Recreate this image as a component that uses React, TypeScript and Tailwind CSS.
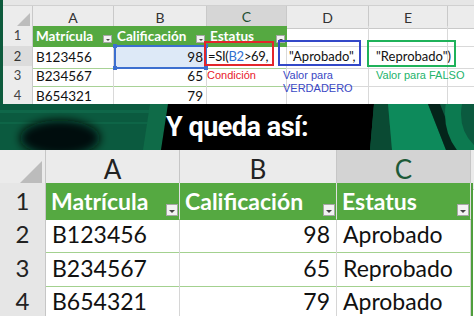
import React from 'react';

// hoja de arriba: columnas y filas
const TOP_GRID = 'grid grid-cols-[30px_81px_93px_80px_82px_79px_29px]';
const BOTTOM_GRID = 'grid grid-cols-[46px_134px_157px_134px_3px]';

function FilterBtn({ big }: { big?: boolean }) {
  return (
    <div
      className={
        big
          ? 'absolute right-[1px] bottom-[3px] w-[12px] h-[12px] bg-[#f2f2f2] border border-[#a6a6a6] flex items-center justify-center'
          : 'absolute right-[1px] bottom-[3px] w-[9px] h-[8px] bg-[#f2f2f2] border border-[#a6a6a6] flex items-center justify-center'
      }
    >
      <div
        className={
          big
            ? 'w-0 h-0 border-l-[3px] border-r-[3px] border-t-[3px] border-l-transparent border-r-transparent border-t-[#444] mt-[2px]'
            : 'w-0 h-0 border-l-[2px] border-r-[2px] border-t-[2px] border-l-transparent border-r-transparent border-t-[#444] mt-[1px]'
        }
      />
    </div>
  );
}

function TopSheet() {
  const num = 'bg-[#ececec] border-r border-b border-[#c9c9c9] flex items-center justify-center text-[13px] text-[#444]';
  const head = 'bg-[#ececec] border-r border-b border-[#c9c9c9] flex items-center justify-center text-[14px] text-[#333]';
  const cell = 'border-r border-b border-[#d9d9d9] flex items-center px-[3px] text-[13.5px] text-[#111] whitespace-nowrap';
  const tcell = 'border-r border-b border-r-[#d9d9d9] border-b-[#a8d296] flex items-center px-[3px] text-[13.5px] text-[#111] whitespace-nowrap';
  const green = 'relative bg-[#55a941] border-r border-b border-[#55a941] flex items-center pl-[3px] text-[13.5px] font-bold text-white whitespace-nowrap';

  return (
    <div className="relative h-[104px] overflow-hidden bg-white border-l-[3px] border-[#0d5a3c]">
      <div className="h-[6px] bg-[#e6e6e6] border-b border-[#d0d0d0]" />
      <div className={`${TOP_GRID} h-[20px]`}>
        <div className="bg-[#ececec] border-r border-b border-[#c9c9c9] flex items-end justify-end pr-[2px] pb-[2px]">
          <div className="w-0 h-0 border-l-[13px] border-b-[13px] border-l-transparent border-b-[#bdbdbd]" />
        </div>
        <div className={head}>A</div>
        <div className={head}>B</div>
        <div className="bg-[#d6d6d6] border-r border-b-2 border-r-[#c9c9c9] border-b-[#217346] flex items-center justify-center text-[14px] text-[#1e4f33]">C</div>
        <div className={head}>D</div>
        <div className={head}>E</div>
        <div className={head}></div>
      </div>
      <div className={`${TOP_GRID} h-[20px]`}>
        <div className={num}>1</div>
        <div className={green}>Matrícula<FilterBtn /></div>
        <div className={green}>Calificación<FilterBtn /></div>
        <div className={green}>Estatus<FilterBtn /></div>
        <div className={cell}></div>
        <div className={cell}></div>
        <div className={cell}></div>
      </div>
      <div className={`${TOP_GRID} h-[20px]`}>
        <div className="bg-[#dcdcdc] border-r border-b border-[#c9c9c9] flex items-center justify-center text-[13px] text-[#333]">2</div>
        <div className={tcell}>B123456</div>
        <div className="relative bg-[#dde9f7] border-2 border-[#3c6fcf] -mt-[1px] flex items-center justify-end px-[2px] text-[13.5px] text-[#111]">
          98
          <div className="absolute -left-[3px] -top-[3px] w-[4px] h-[4px] bg-[#3c6fcf]" />
          <div className="absolute -right-[3px] -top-[3px] w-[4px] h-[4px] bg-[#3c6fcf]" />
          <div className="absolute -left-[3px] -bottom-[3px] w-[4px] h-[4px] bg-[#3c6fcf]" />
          <div className="absolute -right-[3px] -bottom-[3px] w-[4px] h-[4px] bg-[#3c6fcf]" />
        </div>
        <div className="border-r border-b border-r-[#d9d9d9] border-b-[#a8d296] flex items-center pl-[1px] text-[13px] tracking-[-0.3px] text-[#111] whitespace-nowrap">
          =SI(<span className="text-[#2f6fd0]">B2</span>&gt;69,
        </div>
        <div className="border-r border-b border-[#d9d9d9] flex items-center pl-[2px] text-[13px] text-[#111] whitespace-nowrap">"Aprobado",</div>
        <div className="border-r border-b border-[#d9d9d9] flex items-center pl-[7px] text-[13px] text-[#111] whitespace-nowrap">"Reprobado")</div>
        <div className={cell}></div>
      </div>
      <div className={`${TOP_GRID} h-[20px]`}>
        <div className={num}>3</div>
        <div className={tcell}>B234567</div>
        <div className={`${tcell} justify-end`}>65</div>
        <div className={tcell}></div>
        <div className={cell}></div>
        <div className={cell}></div>
        <div className={cell}></div>
      </div>
      <div className={`${TOP_GRID} h-[20px]`}>
        <div className={num}>4</div>
        <div className={tcell}>B654321</div>
        <div className={`${tcell} justify-end`}>79</div>
        <div className={tcell}></div>
        <div className={cell}></div>
        <div className={cell}></div>
        <div className={cell}></div>
      </div>

      {/* anotaciones sobre la fórmula */}
      <div className="absolute left-[201px] top-[41px] w-[70px] h-[25px] border-2 border-[#e3262b]" />
      <div className="absolute left-[275px] top-[40px] w-[83px] h-[26px] border-2 border-[#3348c8]" />
      <div className="absolute left-[364px] top-[40px] w-[89px] h-[27px] border-2 border-[#1fb25a]" />
      <div className="absolute left-[204px] top-[69px] text-[11px] leading-[13px] text-[#e8202a] font-['Liberation_Sans',sans-serif]">Condición</div>
      <div className="absolute left-[280px] top-[69px] text-[11px] leading-[13px] text-[#3a48c4] font-['Liberation_Sans',sans-serif]">
        Valor para
        <br />
        VERDADERO
      </div>
      <div className="absolute left-[373px] top-[69px] text-[11px] leading-[13px] text-[#22b36b] font-['Liberation_Sans',sans-serif]">Valor para FALSO</div>
    </div>
  );
}

function Band() {
  return (
    <div className="relative h-[46px] flex items-center justify-center overflow-hidden">
      <svg className="absolute inset-0" width="474" height="46" viewBox="0 0 474 46">
        <defs>
          <filter id="blur" x="-20%" y="-50%" width="140%" height="200%">
            <feGaussianBlur stdDeviation="5" />
          </filter>
        </defs>
        <rect width="474" height="46" fill="#0b5a3f" />
        <rect y="6" width="160" height="3" fill="#127050" opacity="0.6" />
        <rect y="18" width="160" height="2" fill="#127050" opacity="0.5" />
        <ellipse cx="60" cy="34" rx="40" ry="18" fill="#030a07" filter="url(#blur)" />
        <polygon points="150,0 168,0 161,46 143,46" fill="#0f6b48" />
        <polygon points="168,0 374,0 370,46 161,46" fill="#000" />
        <polygon points="374,0 388,0 392,46 370,46" fill="#0a4a33" />
        <polygon points="388,0 428,0 446,46 392,46" fill="#0d8a5b" />
        <polygon points="428,0 440,0 458,46 446,46" fill="#04241a" />
        <circle cx="505" cy="10" r="52" fill="none" stroke="#0c7a50" strokeWidth="16" />
      </svg>
      <span className="relative text-white font-bold text-[27px] leading-none font-['Roboto',sans-serif] tracking-[-0.5px]">
        Y queda así:
      </span>
    </div>
  );
}

function BottomSheet() {
  const num = 'bg-[#e6e6e6] border-r border-b border-[#c6c6c6] flex items-center justify-center text-[24px] text-[#222]';
  const head = 'bg-[#ebebeb] border-r border-b border-[#c6c6c6] flex items-center justify-center text-[26px] text-[#222]';
  const tcell = 'border-r border-b border-r-[#d6d6d6] border-b-[#a3d18f] flex items-center px-[6px] text-[23px] text-[#111] whitespace-nowrap';
  const green = 'relative bg-[#55a941] border-r border-b border-r-[#e0e0e0] border-b-[#55a941] flex items-center pl-[5px] text-[23px] font-bold text-white whitespace-nowrap';
  const edge = 'border-l-2 border-[#4f9e3c]';

  const rows = [
    { n: '2', id: 'B123456', cal: '98', st: 'Aprobado', h: 'h-[34px]' },
    { n: '3', id: 'B234567', cal: '65', st: 'Reprobado', h: 'h-[33px]' },
    { n: '4', id: 'B654321', cal: '79', st: 'Aprobado', h: 'h-[33px]' },
  ];

  return (
    <div className="bg-white">
      <div className={`${BOTTOM_GRID} h-[33px]`}>
        <div className="bg-[#ebebeb] border-r border-b border-[#c6c6c6] flex items-end justify-end pr-[3px] pb-[4px]">
          <div className="w-0 h-0 border-l-[24px] border-b-[24px] border-l-transparent border-b-[#bcbcbc]" />
        </div>
        <div className={head}>A</div>
        <div className={head}>B</div>
        <div className="bg-[#d3d3d3] border-r border-b border-[#c6c6c6] flex items-center justify-center text-[26px] text-[#1d5a37]">C</div>
        <div className="bg-[#ebebeb] border-b border-[#c6c6c6]" />
      </div>
      <div className={`${BOTTOM_GRID} h-[33px]`}>
        <div className={num}>1</div>
        <div className={green}>Matrícula<FilterBtn big /></div>
        <div className={green}>Calificación<FilterBtn big /></div>
        <div className={green}>Estatus<FilterBtn big /></div>
        <div className={edge} />
      </div>
      {rows.map((r) => (
        <div key={r.n} className={`${BOTTOM_GRID} ${r.h}`}>
          <div className={num}>{r.n}</div>
          <div className={tcell}>{r.id}</div>
          <div className={`${tcell} justify-end`}>{r.cal}</div>
          <div className={tcell}>{r.st}</div>
          <div className={edge} />
        </div>
      ))}
    </div>
  );
}

export default function App() {
  return (
    <div className="w-[474px] h-[316px] overflow-hidden bg-white font-['Lato',sans-serif]">
      <TopSheet />
      <Band />
      <BottomSheet />
    </div>
  );
}
